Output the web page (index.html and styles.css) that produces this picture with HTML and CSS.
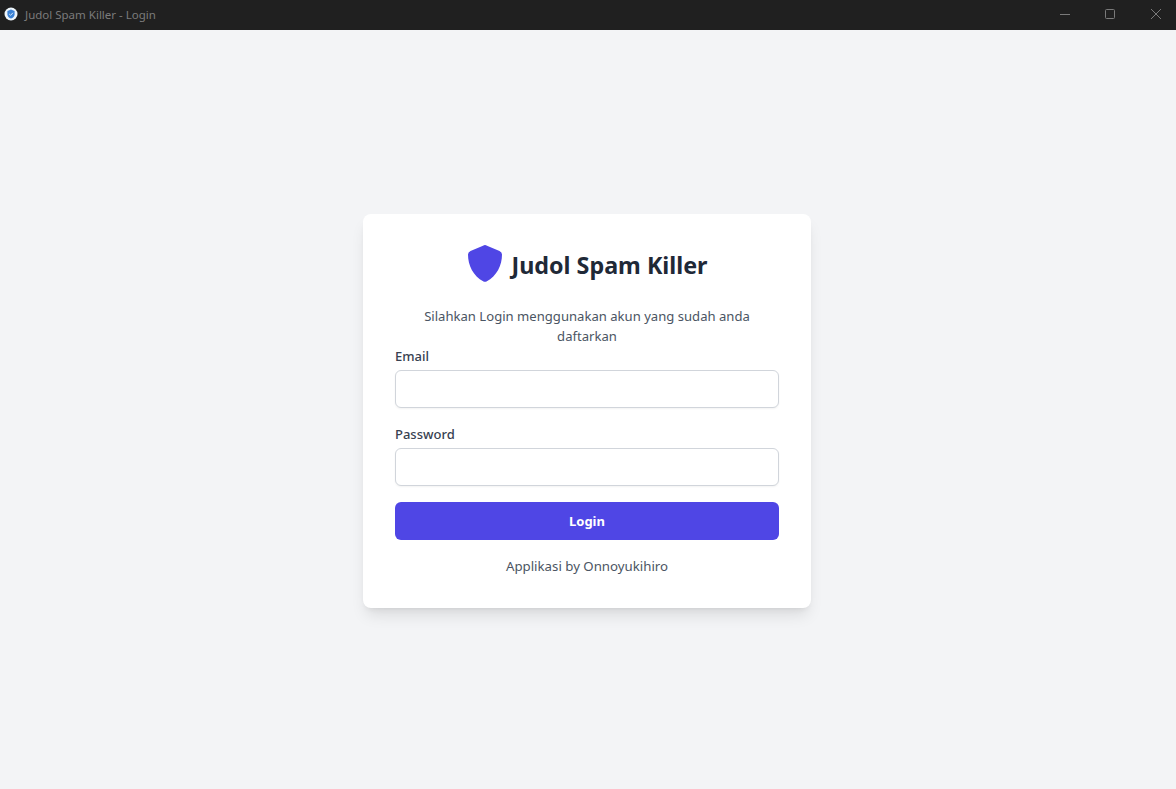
FILE: index.html
```html
<!DOCTYPE html>
<html lang="en">
<head>
    <meta charset="UTF-8">
    <meta name="viewport" content="width=device-width, initial-scale=1.0">
    <title>Judol Spam Killer - Login</title>
    <link rel="stylesheet" href="styles.css">
</head>
<body>
    <div class="titlebar">
        <div class="titlebar-left">
            <svg class="app-icon" viewBox="0 0 14 14">
                <circle cx="7" cy="7" r="6.5" fill="#eef6fc"/>
                <path d="M7 2.6 10.6 4v3.2c0 2.2-1.6 3.6-3.6 4.4-2-.8-3.6-2.2-3.6-4.4V4Z" fill="#3b82d6"/>
                <path d="M5.2 7 6.6 8.3 8.9 5.8" fill="none" stroke="#d5e8f8" stroke-width="1"/>
            </svg>
            <span class="window-title">Judol Spam Killer - Login</span>
        </div>
        <div class="window-buttons">
            <div class="window-button">
                <svg viewBox="0 0 10 10" width="10" height="10"><path d="M0 5.5H10" stroke="#7a7a7a" fill="none"/></svg>
            </div>
            <div class="window-button">
                <svg viewBox="0 0 10 10" width="10" height="10"><rect x="0.5" y="0.5" width="9" height="9" rx="1" stroke="#7a7a7a" fill="none"/></svg>
            </div>
            <div class="window-button">
                <svg viewBox="0 0 10 10" width="10" height="10"><path d="M0 0 10 10M10 0 0 10" stroke="#7a7a7a" fill="none"/></svg>
            </div>
        </div>
    </div>

    <main class="content">
        <div class="login-card">
            <div class="brand">
                <svg class="brand-icon" viewBox="0 0 34 37">
                    <path d="M17 0Q18 0 19 .7L31.5 6Q34 7 34 9.5C34 20 29 31 18.5 36.5Q17 37 15.5 36.5C5 31 0 20 0 9.5Q0 7 2.5 6L15 .7Q16 0 17 0Z" fill="#4f46e5"/>
                </svg>
                <h1 class="brand-name">Judol Spam Killer</h1>
            </div>
            <p class="intro">Silahkan Login menggunakan akun yang sudah anda daftarkan</p>
            <form>
                <div class="field">
                    <label class="field-label" for="email">Email</label>
                    <input class="field-input" id="email" type="email">
                </div>
                <div class="field">
                    <label class="field-label" for="password">Password</label>
                    <input class="field-input" id="password" type="password">
                </div>
                <button class="login-button" type="button">Login</button>
            </form>
            <p class="credit">Applikasi by Onnoyukihiro</p>
        </div>
    </main>
</body>
</html>
```

FILE: styles.css
```css
* {
    box-sizing: border-box;
}
body {
    margin: 0;
    height: 789px;
    overflow: hidden;
    display: flex;
    flex-direction: column;
    font-family: "Noto Sans", "Open Sans", sans-serif;
    background-color: #f3f4f6;
}
.titlebar {
    height: 30px;
    flex: none;
    padding-bottom: 2px;
    display: flex;
    justify-content: space-between;
    background-color: #202020;
}
.titlebar-left {
    display: flex;
    align-items: center;
    padding-left: 4px;
}
.app-icon {
    width: 14px;
    height: 14px;
    margin-right: 7px;
}
.window-title {
    font-size: 11.5px;
    color: #7b7b7b;
}
.window-buttons {
    display: flex;
    margin-right: -3px;
}
.window-button {
    width: 46px;
    display: flex;
    align-items: center;
    justify-content: center;
}
.window-button:first-child {
    width: 44px;
}
.content {
    flex: 1;
    display: flex;
    align-items: center;
    justify-content: center;
    padding-top: 3px;
    padding-right: 2px;
}
.login-card {
    width: 448px;
    padding: 32px;
    background-color: white;
    border-radius: 8px;
    box-shadow: 0 10px 15px -3px rgba(0,0,0,0.1), 0 4px 6px -4px rgba(0,0,0,0.1);
}
.brand {
    height: 40px;
    margin-bottom: 20px;
    padding-left: 2px;
    display: flex;
    justify-content: center;
    gap: 9px;
}
.brand-icon {
    width: 34px;
    height: 37px;
    margin-top: -1px;
}
.brand-name {
    margin: 0;
    font-size: 23.3px;
    line-height: 39px;
    font-weight: 700;
    color: #1f2937;
}
.intro {
    margin: 0;
    padding: 0 16px;
    font-size: 13.1px;
    line-height: 20px;
    text-align: center;
    color: #4b5563;
}
.field {
    margin-bottom: 16px;
}
.field-label {
    display: block;
    margin-bottom: 4px;
    font-size: 13px;
    line-height: 20px;
    font-weight: 500;
    color: #374151;
}
.field-input {
    display: block;
    width: 100%;
    height: 38px;
    border: 1px solid #d1d5db;
    border-radius: 6px;
    background-color: white;
    box-shadow: 0 1px 2px rgba(0,0,0,0.05);
}
.login-button {
    display: block;
    width: 100%;
    height: 38px;
    border: none;
    border-radius: 6px;
    background-color: #4f46e5;
    color: white;
    font-family: inherit;
    font-size: 13px;
    font-weight: 700;
}
.credit {
    margin: 16px 0 0;
    font-size: 13.25px;
    line-height: 20px;
    text-align: center;
    color: #4b5563;
}
```
